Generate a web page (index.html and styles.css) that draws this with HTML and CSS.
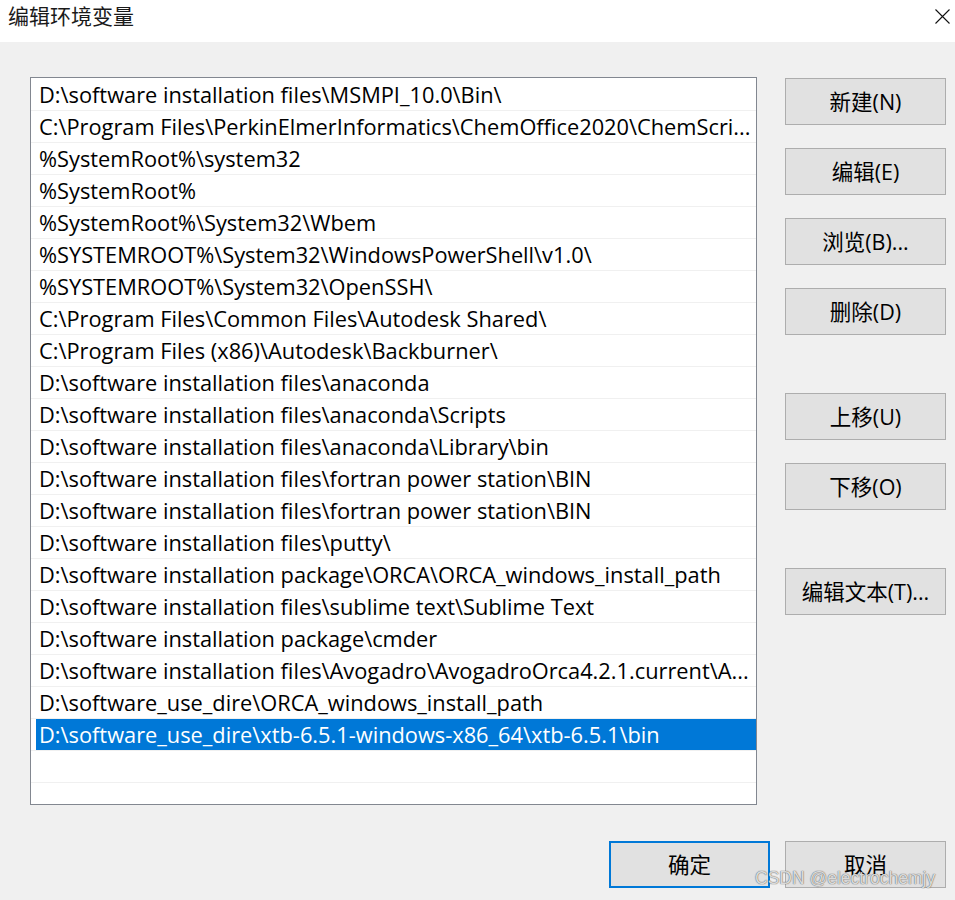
FILE: index.html
```html
<!DOCTYPE html>
<html lang="zh-CN">
<head>
<meta charset="utf-8">
<title>编辑环境变量</title>
<link rel="stylesheet" href="styles.css">
</head>
<body>
<div class="dialog">
  <div class="titlebar">
    <span class="title">编辑环境变量</span>
    <span class="close">
      <svg width="15" height="15" viewBox="0 0 15 15"><path d="M0.5 0.5 L14.5 14.5 M14.5 0.5 L0.5 14.5" stroke="#111" stroke-width="1.1" fill="none"/></svg>
    </span>
  </div>
  <div class="content">
    <div class="list">
      <div class="row">D:\software installation files\MSMPI_10.0\Bin\</div>
      <div class="row">C:\Program Files\PerkinElmerInformatics\ChemOffice2020\ChemScri...</div>
      <div class="row">%SystemRoot%\system32</div>
      <div class="row">%SystemRoot%</div>
      <div class="row">%SystemRoot%\System32\Wbem</div>
      <div class="row">%SYSTEMROOT%\System32\WindowsPowerShell\v1.0\</div>
      <div class="row">%SYSTEMROOT%\System32\OpenSSH\</div>
      <div class="row">C:\Program Files\Common Files\Autodesk Shared\</div>
      <div class="row">C:\Program Files (x86)\Autodesk\Backburner\</div>
      <div class="row">D:\software installation files\anaconda</div>
      <div class="row">D:\software installation files\anaconda\Scripts</div>
      <div class="row">D:\software installation files\anaconda\Library\bin</div>
      <div class="row">D:\software installation files\fortran power station\BIN</div>
      <div class="row">D:\software installation files\fortran power station\BIN</div>
      <div class="row">D:\software installation files\putty\</div>
      <div class="row">D:\software installation package\ORCA\ORCA_windows_install_path</div>
      <div class="row">D:\software installation files\sublime text\Sublime Text</div>
      <div class="row">D:\software installation package\cmder</div>
      <div class="row">D:\software installation files\Avogadro\AvogadroOrca4.2.1.current\A...</div>
      <div class="row">D:\software_use_dire\ORCA_windows_install_path</div>
      <div class="row selected">D:\software_use_dire\xtb-6.5.1-windows-x86_64\xtb-6.5.1\bin</div>
      <div class="row"></div>
      <div class="row"></div>
    </div>
    <div class="side">
      <div class="group">
        <button class="btn">新建(N)</button>
        <button class="btn">编辑(E)</button>
        <button class="btn">浏览(B)...</button>
        <button class="btn">删除(D)</button>
      </div>
      <div class="group">
        <button class="btn">上移(U)</button>
        <button class="btn">下移(O)</button>
      </div>
      <div class="group">
        <button class="btn">编辑文本(T)...</button>
      </div>
    </div>
  </div>
  <div class="footer">
    <button class="btn primary">确定</button>
    <button class="btn">取消</button>
  </div>
  <div class="watermark">CSDN @electrochemjy</div>
</div>
</body>
</html>
```

FILE: styles.css
```css
html, body {
  margin: 0;
  padding: 0;
}
body {
  background: #f0f0f0;
  font-family: "Open Sans", "Noto Sans CJK SC", sans-serif;
}
.dialog {
  position: relative;
  width: 955px;
  height: 900px;
  background: #f0f0f0;
  overflow: hidden;
}
.titlebar {
  height: 42px;
  background: #ffffff;
  display: flex;
  align-items: center;
  justify-content: space-between;
  padding: 0 5px 0 8px;
  box-sizing: border-box;
}
.title {
  font-family: "Noto Sans CJK SC", sans-serif;
  font-size: 21px;
  color: #1a1a1a;
  margin-top: -12px;
}
.close {
  display: flex;
  align-items: center;
  justify-content: center;
  width: 15px;
  height: 15px;
  margin-top: -9px;
}
.close svg {
  display: block;
}
.content {
  display: flex;
  padding: 35px 9px 0 30px;
  gap: 28px;
}
.list {
  width: 728px;
  height: 728px;
  box-sizing: border-box;
  border: 1px solid #828790;
  background: #ffffff;
  padding-top: 1px;
  overflow: hidden;
}
.row {
  height: 31px;
  border-bottom: 1px solid #f0f0f0;
  padding-left: 8px;
  font-family: "Open Sans", "Noto Sans CJK SC", sans-serif;
  font-size: 21.8px;
  line-height: 31px;
  color: #000;
  white-space: nowrap;
  overflow: hidden;
}
.row.selected {
  background: linear-gradient(to right, transparent 5px, #0078d7 5px);
  color: #ffffff;
}
.side {
  width: 161px;
  padding-top: 1px;
  display: flex;
  flex-direction: column;
  gap: 58px;
}
.group {
  display: flex;
  flex-direction: column;
  gap: 23px;
}
.btn {
  width: 161px;
  height: 47px;
  box-sizing: border-box;
  background: #e1e1e1;
  border: 1px solid #adadad;
  border-radius: 0;
  font-family: "Open Sans", "Noto Sans CJK SC", sans-serif;
  font-size: 21.5px;
  color: #000;
  padding: 0 0 3px 0;
  margin: 0;
}
.btn.primary {
  border: 2px solid #0078d7;
}
.footer {
  display: flex;
  justify-content: flex-end;
  gap: 15px;
  padding-right: 9px;
  margin-top: 36px;
}
.watermark {
  position: absolute;
  left: 755px;
  top: 868px;
  font-family: "Liberation Sans", sans-serif;
  font-size: 17.5px;
  color: rgba(255, 255, 255, 0.8);
  text-shadow: 0 0 1px rgba(60, 60, 60, 0.7), 0 0 1px rgba(60, 60, 60, 0.7);
  white-space: nowrap;
}
```
